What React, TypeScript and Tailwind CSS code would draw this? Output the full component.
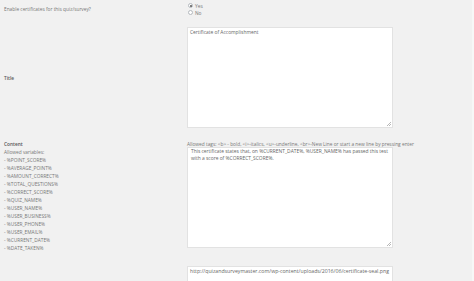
import React from "react";

const VARIABLES = [
  "%POINT_SCORE%",
  "%AVERAGE_POINT%",
  "%AMOUNT_CORRECT%",
  "%TOTAL_QUESTIONS%",
  "%CORRECT_SCORE%",
  "%QUIZ_NAME%",
  "%USER_NAME%",
  "%USER_BUSINESS%",
  "%USER_PHONE%",
  "%USER_EMAIL%",
  "%CURRENT_DATE%",
  "%DATE_TAKEN%",
];

function Grip() {
  return (
    <svg className="absolute right-[1px] bottom-[1px]" width="5" height="5" viewBox="0 0 5 5">
      <path d="M1 5 L5 1 M3 5 L5 3" stroke="#9a9a9a" strokeWidth="0.7" />
    </svg>
  );
}

function Radio({ label, checked }: { label: string; checked?: boolean }) {
  return (
    <div className="flex items-center gap-[2px] h-[7px]">
      <span className="w-[5px] h-[5px] rounded-full border-[0.5px] border-[#b4b9be] bg-white flex items-center justify-center">
        {checked && <span className="w-[2px] h-[2px] rounded-full bg-[#555]" />}
      </span>
      <span>{label}</span>
    </div>
  );
}

export default function App() {
  return (
    <div
      className="w-[474px] h-[281px] overflow-hidden bg-[#f1f1f1] text-[#777] text-[4.8px] leading-[8px] border-r-2 border-r-[#f7f7f7]"
      style={{ fontFamily: '"Open Sans", "Liberation Sans", sans-serif' }}
    >
      <div className="grid grid-cols-[187px_206px]">
        {/* enable row */}
        <div className="pl-[4px] pt-[5px]">Enable certificates for this quiz/survey?</div>
        <div className="pt-[2px] pl-[1px]">
          <Radio label="Yes" checked />
          <Radio label="No" />
        </div>

        {/* title row */}
        <div className="pl-[4px] flex items-center font-semibold text-[#555] mt-[11px]">Title</div>
        <div className="relative mt-[11px] h-[101px] bg-white border-[0.5px] border-[#e2e2e2] px-[2px] text-[4.9px] text-[#666]">
          Certificate of Accomplishment
          <Grip />
        </div>

        {/* content row */}
        <div className="pl-[4px] pt-[12px]">
          <div className="font-semibold text-[#555]">Content</div>
          <div>Allowed variables:</div>
          {VARIABLES.map((v) => (
            <div key={v}>- {v}</div>
          ))}
        </div>
        <div className="pt-[12px]">
          <div className="whitespace-nowrap">
            Allowed tags: &lt;b&gt; - bold, &lt;i&gt;-italics, &lt;u&gt;-underline, &lt;br&gt;-New Line or start a new line by pressing enter
          </div>
          <div className="relative h-[101px] bg-white border-[0.5px] border-[#e2e2e2] pl-[3px] text-[4.9px] leading-[7px] text-[#666] -mt-[1px] whitespace-nowrap">
            <div>This certificate states that, on %CURRENT_DATE%, %USER_NAME% has passed this test</div>
            <div>with a score of %CORRECT_SCORE%.</div>
            <Grip />
          </div>
        </div>

        {/* image row */}
        <div />
        <div className="mt-[14px] h-[30px] bg-white border-[0.5px] border-[#e2e2e2] px-[2px] text-[5.2px] text-[#666] whitespace-nowrap">
          http://quizandsurveymaster.com/wp-content/uploads/2016/06/certificate-seal.png
        </div>
      </div>
    </div>
  );
}
